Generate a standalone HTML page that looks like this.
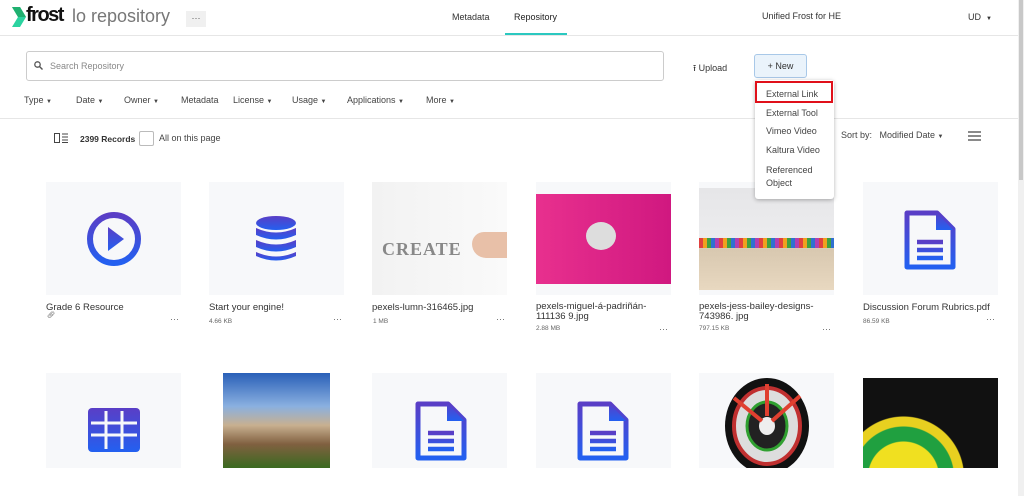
<!DOCTYPE html><html><head><meta charset="utf-8"><style>
*{margin:0;padding:0;box-sizing:border-box}
body{width:1024px;height:496px;overflow:hidden;background:#fff;font-family:"Liberation Sans",sans-serif;color:#333;position:relative}
.a{position:absolute;white-space:nowrap}
.card{position:absolute;width:135px;background:#f7f8fa}
.t{position:absolute;font-size:9.5px;color:#333}
.s{position:absolute;font-size:6.5px;color:#666}
.d{position:absolute;font-size:9px;color:#666;letter-spacing:0px}
.f{font-size:9px;color:#444}
.m{font-size:9px;color:#333}
</style></head><body>
<svg width="0" height="0" style="position:absolute"><defs><linearGradient id="g" x1="0" y1="0" x2="0" y2="1"><stop offset="0" stop-color="#5a3ec6"/><stop offset="1" stop-color="#2360f0"/></linearGradient></defs></svg>
<!-- header -->
<svg class="a" style="left:12px;top:7px" width="14" height="20"><path d="M0 0 L8 0 L14 10 L8 20 L0 20 L6 10Z" fill="#2bd3a0"/><path d="M0 0 L8 0 L14 10 L6 10Z" fill="#20b070"/></svg>
<div class="a" style="left:26px;top:4px;font-size:20px;font-weight:bold;color:#111;letter-spacing:-1.5px">frost</div>
<div class="a" style="left:72px;top:6px;font-size:18px;color:#777">lo repository</div>
<div class="a" style="left:186px;top:11px;width:20px;height:16px;background:#f0f0f0;font-size:9px;text-align:center;line-height:14px;color:#555">···</div>
<div class="a m" style="left:452px;top:12px">Metadata</div>
<div class="a m" style="left:514px;top:12px;color:#222">Repository</div>
<div class="a" style="left:505px;top:33px;width:62px;height:2px;background:#2bc8c0"></div>
<div class="a m" style="left:762px;top:11px">Unified Frost for HE</div>
<div class="a m" style="left:968px;top:12px">UD &nbsp;<span style="font-size:6px">▼</span></div>
<div class="a" style="left:0;top:35px;width:1018px;height:1px;background:#e6e6e6"></div>
<div class="a" style="left:1018px;top:0;width:6px;height:496px;background:#f0f0f0"></div>
<div class="a" style="left:1019px;top:0;width:4px;height:180px;background:#c8c8c8"></div>
<!-- search -->
<div class="a" style="left:26px;top:51px;width:638px;height:30px;border:1px solid #ccc;border-radius:3px"></div>
<svg class="a" style="left:34px;top:61px" width="9" height="9"><circle cx="3.5" cy="3.5" r="2.7" stroke="#555" stroke-width="1.3" fill="none"/><path d="M5.5 5.5L8.5 8.5" stroke="#555" stroke-width="1.4"/></svg>
<div class="a f" style="left:50px;top:61px;color:#888">Search Repository</div>
<div class="a m" style="left:693px;top:61px">⭱ Upload</div>
<div class="a" style="left:754px;top:54px;width:53px;height:24px;border:1px solid #a8c8e8;background:#eaf3fb;border-radius:3px;font-size:9px;text-align:center;line-height:22px">+ New</div>
<!-- filters -->
<div class="a f" style="left:24px;top:95px">Type <span style="font-size:6px">▼</span></div>
<div class="a f" style="left:76px;top:95px">Date <span style="font-size:6px">▼</span></div>
<div class="a f" style="left:124px;top:95px">Owner <span style="font-size:6px">▼</span></div>
<div class="a f" style="left:181px;top:95px">Metadata</div>
<div class="a f" style="left:233px;top:95px">License <span style="font-size:6px">▼</span></div>
<div class="a f" style="left:292px;top:95px">Usage <span style="font-size:6px">▼</span></div>
<div class="a f" style="left:347px;top:95px">Applications <span style="font-size:6px">▼</span></div>
<div class="a f" style="left:426px;top:95px">More <span style="font-size:6px">▼</span></div>
<div class="a" style="left:0;top:118px;width:1018px;height:1px;background:#e6e6e6"></div>
<!-- records -->
<svg class="a" style="left:54px;top:133px" width="14" height="10"><rect x="0.5" y="0.5" width="5" height="9" fill="none" stroke="#444"/><path d="M8 1h6M8 4h6M8 7h6M8 9.5h6" stroke="#444"/></svg>
<div class="a" style="left:80px;top:134px;font-size:8.5px;font-weight:bold;color:#333">2399 Records</div>
<div class="a" style="left:139px;top:131px;width:15px;height:15px;border:1px solid #bbb;border-radius:2px"></div>
<div class="a f" style="left:159px;top:133px">All on this page</div>
<div class="a f" style="left:841px;top:130px">Sort by: &nbsp; Modified Date <span style="font-size:6px">▼</span></div>
<svg class="a" style="left:968px;top:131px" width="13" height="10"><path d="M0 1h13M0 5h13M0 9h13" stroke="#444" stroke-width="1.2"/></svg>
<!-- row 1 -->
<div class="card" style="left:46px;top:182px;height:113px"><svg style="position:absolute;left:40px;top:29px" width="56" height="56"><circle cx="28" cy="28" r="24" stroke="url(#g)" stroke-width="6" fill="none"/><path d="M22 16L38 28L22 40Z" fill="url(#g)"/></svg></div>
<div class="t" style="left:46px;top:302px">Grade 6 Resource</div><div class="s" style="left:47px;top:311px">🔗︎</div><div class="d" style="left:170px;top:314px">···</div>
<div class="card" style="left:209px;top:182px;height:113px"><svg style="position:absolute;left:46px;top:33px" width="42" height="48"><g fill="url(#g)"><ellipse cx="21" cy="8" rx="20" ry="7"/><path d="M1 13q20 9 40 0v7q-20 9 -40 0z"/><path d="M1 25q20 9 40 0v7q-20 9 -40 0z"/><path d="M1 37q20 9 40 0v4q-20 9 -40 0z"/></g></svg></div>
<div class="t" style="left:209px;top:302px">Start your engine!</div><div class="s" style="left:209px;top:318px">4.66 KB</div><div class="d" style="left:333px;top:314px">···</div>
<div class="card" style="left:372px;top:182px;height:113px;background:linear-gradient(90deg,#f2f2f2,#fafafa)"><div style="position:absolute;left:10px;top:57px;font-family:'Liberation Serif',serif;font-weight:bold;font-size:18px;color:#888;letter-spacing:1px">CREATE</div><div style="position:absolute;left:100px;top:50px;width:35px;height:26px;background:#e8c0a8;border-radius:12px 0 0 14px"></div></div>
<div class="t" style="left:372px;top:302px">pexels-lumn-316465.jpg</div><div class="s" style="left:373px;top:318px">1 MB</div><div class="d" style="left:496px;top:314px">···</div>
<div class="card" style="left:536px;top:182px;height:113px"><div style="position:absolute;left:0;top:12px;width:135px;height:90px;background:linear-gradient(90deg,#e8308e,#d01880)"><div style="position:absolute;left:50px;top:28px;width:30px;height:28px;background:#ddd;border-radius:50%"></div></div></div>
<div class="t" style="left:536px;top:302px;width:135px;white-space:normal;line-height:10px">pexels-miguel-á-padriñán-111136 9.jpg</div><div class="s" style="left:536px;top:325px">2.88 MB</div><div class="d" style="left:659px;top:324px">···</div>
<div class="card" style="left:699px;top:182px;height:113px"><div style="position:absolute;left:0;top:6px;width:135px;height:102px;background:linear-gradient(180deg,#e6e6e8 0%,#ececee 50%,#d8c8b0 60%,#e8d8c0 100%)"><div style="position:absolute;left:0;top:50px;width:135px;height:10px;background:repeating-linear-gradient(90deg,#e04040 0 4px,#f0a020 4px 8px,#40a040 8px 12px,#3070d0 12px 16px,#b040b0 16px 20px)"></div></div></div>
<div class="t" style="left:699px;top:302px;width:140px;white-space:normal;line-height:10px">pexels-jess-bailey-designs-743986. jpg</div><div class="s" style="left:699px;top:325px">797.15 KB</div><div class="d" style="left:822px;top:324px">···</div>
<div class="card" style="left:863px;top:182px;height:113px"><svg style="position:absolute;left:40px;top:27px" width="54" height="62"><path d="M4 4h30l16 16v38h-46z" fill="none" stroke="url(#g)" stroke-width="5" stroke-linejoin="round"/><path d="M33 3v18h17" fill="url(#g)"/><path d="M14 33h26M14 41h26M14 49h26" stroke="url(#g)" stroke-width="4.5"/></svg></div>
<div class="t" style="left:863px;top:302px">Discussion Forum Rubrics.pdf</div><div class="s" style="left:863px;top:318px">86.59 KB</div><div class="d" style="left:986px;top:314px">···</div>
<!-- row 2 -->
<div class="card" style="left:46px;top:373px;height:95px"><svg style="position:absolute;left:42px;top:35px" width="52" height="44"><rect x="0" y="0" width="52" height="44" rx="4" fill="url(#g)"/><path d="M3 15h46M3 27h46M18 3v38M34 3v38" stroke="#f7f8fa" stroke-width="3"/></svg></div>
<div class="card" style="left:209px;top:373px;height:95px;background:#fff"><div style="position:absolute;left:14px;top:0;width:107px;height:95px;background:linear-gradient(180deg,#2a60b8 0%,#8ab0e0 35%,#c8b090 55%,#806040 75%,#3a6a20 100%)"></div></div>
<div class="card" style="left:372px;top:373px;height:95px"><svg style="position:absolute;left:42px;top:27px" width="54" height="62"><path d="M4 4h30l16 16v38h-46z" fill="none" stroke="url(#g)" stroke-width="5" stroke-linejoin="round"/><path d="M33 3v18h17" fill="url(#g)"/><path d="M14 33h26M14 41h26M14 49h26" stroke="url(#g)" stroke-width="4.5"/></svg></div>
<div class="card" style="left:536px;top:373px;height:95px"><svg style="position:absolute;left:40px;top:27px" width="54" height="62"><path d="M4 4h30l16 16v38h-46z" fill="none" stroke="url(#g)" stroke-width="5" stroke-linejoin="round"/><path d="M33 3v18h17" fill="url(#g)"/><path d="M14 33h26M14 41h26M14 49h26" stroke="url(#g)" stroke-width="4.5"/></svg></div>
<div class="card" style="left:699px;top:373px;height:95px"><svg style="position:absolute;left:13px;top:3px" width="110" height="92"><ellipse cx="55" cy="50" rx="42" ry="48" fill="#111"/><ellipse cx="55" cy="50" rx="33" ry="38" fill="#ddd" stroke="#c03030" stroke-width="4"/><ellipse cx="55" cy="50" rx="20" ry="24" fill="#222" stroke="#30a030" stroke-width="3"/><ellipse cx="55" cy="50" rx="8" ry="9" fill="#eee"/><path d="M22 22L50 45M88 20L60 45M55 8L55 40" stroke="#e04030" stroke-width="4"/></svg></div>
<div class="card" style="left:863px;top:373px;height:95px;background:#fff"><div style="position:absolute;left:0;top:5px;width:135px;height:90px;background:radial-gradient(circle at 30% 110%,#f0e020 0 35px,#20a040 36px 50px,#e8d020 51px 60px,#111 61px)"></div></div>
<!-- dropdown -->
<div class="a" style="left:755px;top:80px;width:79px;height:119px;background:#fff;border-radius:3px;box-shadow:0 1px 4px rgba(0,0,0,.3)"></div>
<div class="a" style="left:755px;top:81px;width:78px;height:22px;border:2px solid #e0101a"></div>
<div class="a f" style="left:766px;top:89px">External Link</div>
<div class="a f" style="left:766px;top:108px">External Tool</div>
<div class="a f" style="left:766px;top:126px">Vimeo Video</div>
<div class="a f" style="left:766px;top:145px">Kaltura Video</div>
<div class="a f" style="left:766px;top:164px;line-height:13px">Referenced<br>Object</div>
</body></html>
